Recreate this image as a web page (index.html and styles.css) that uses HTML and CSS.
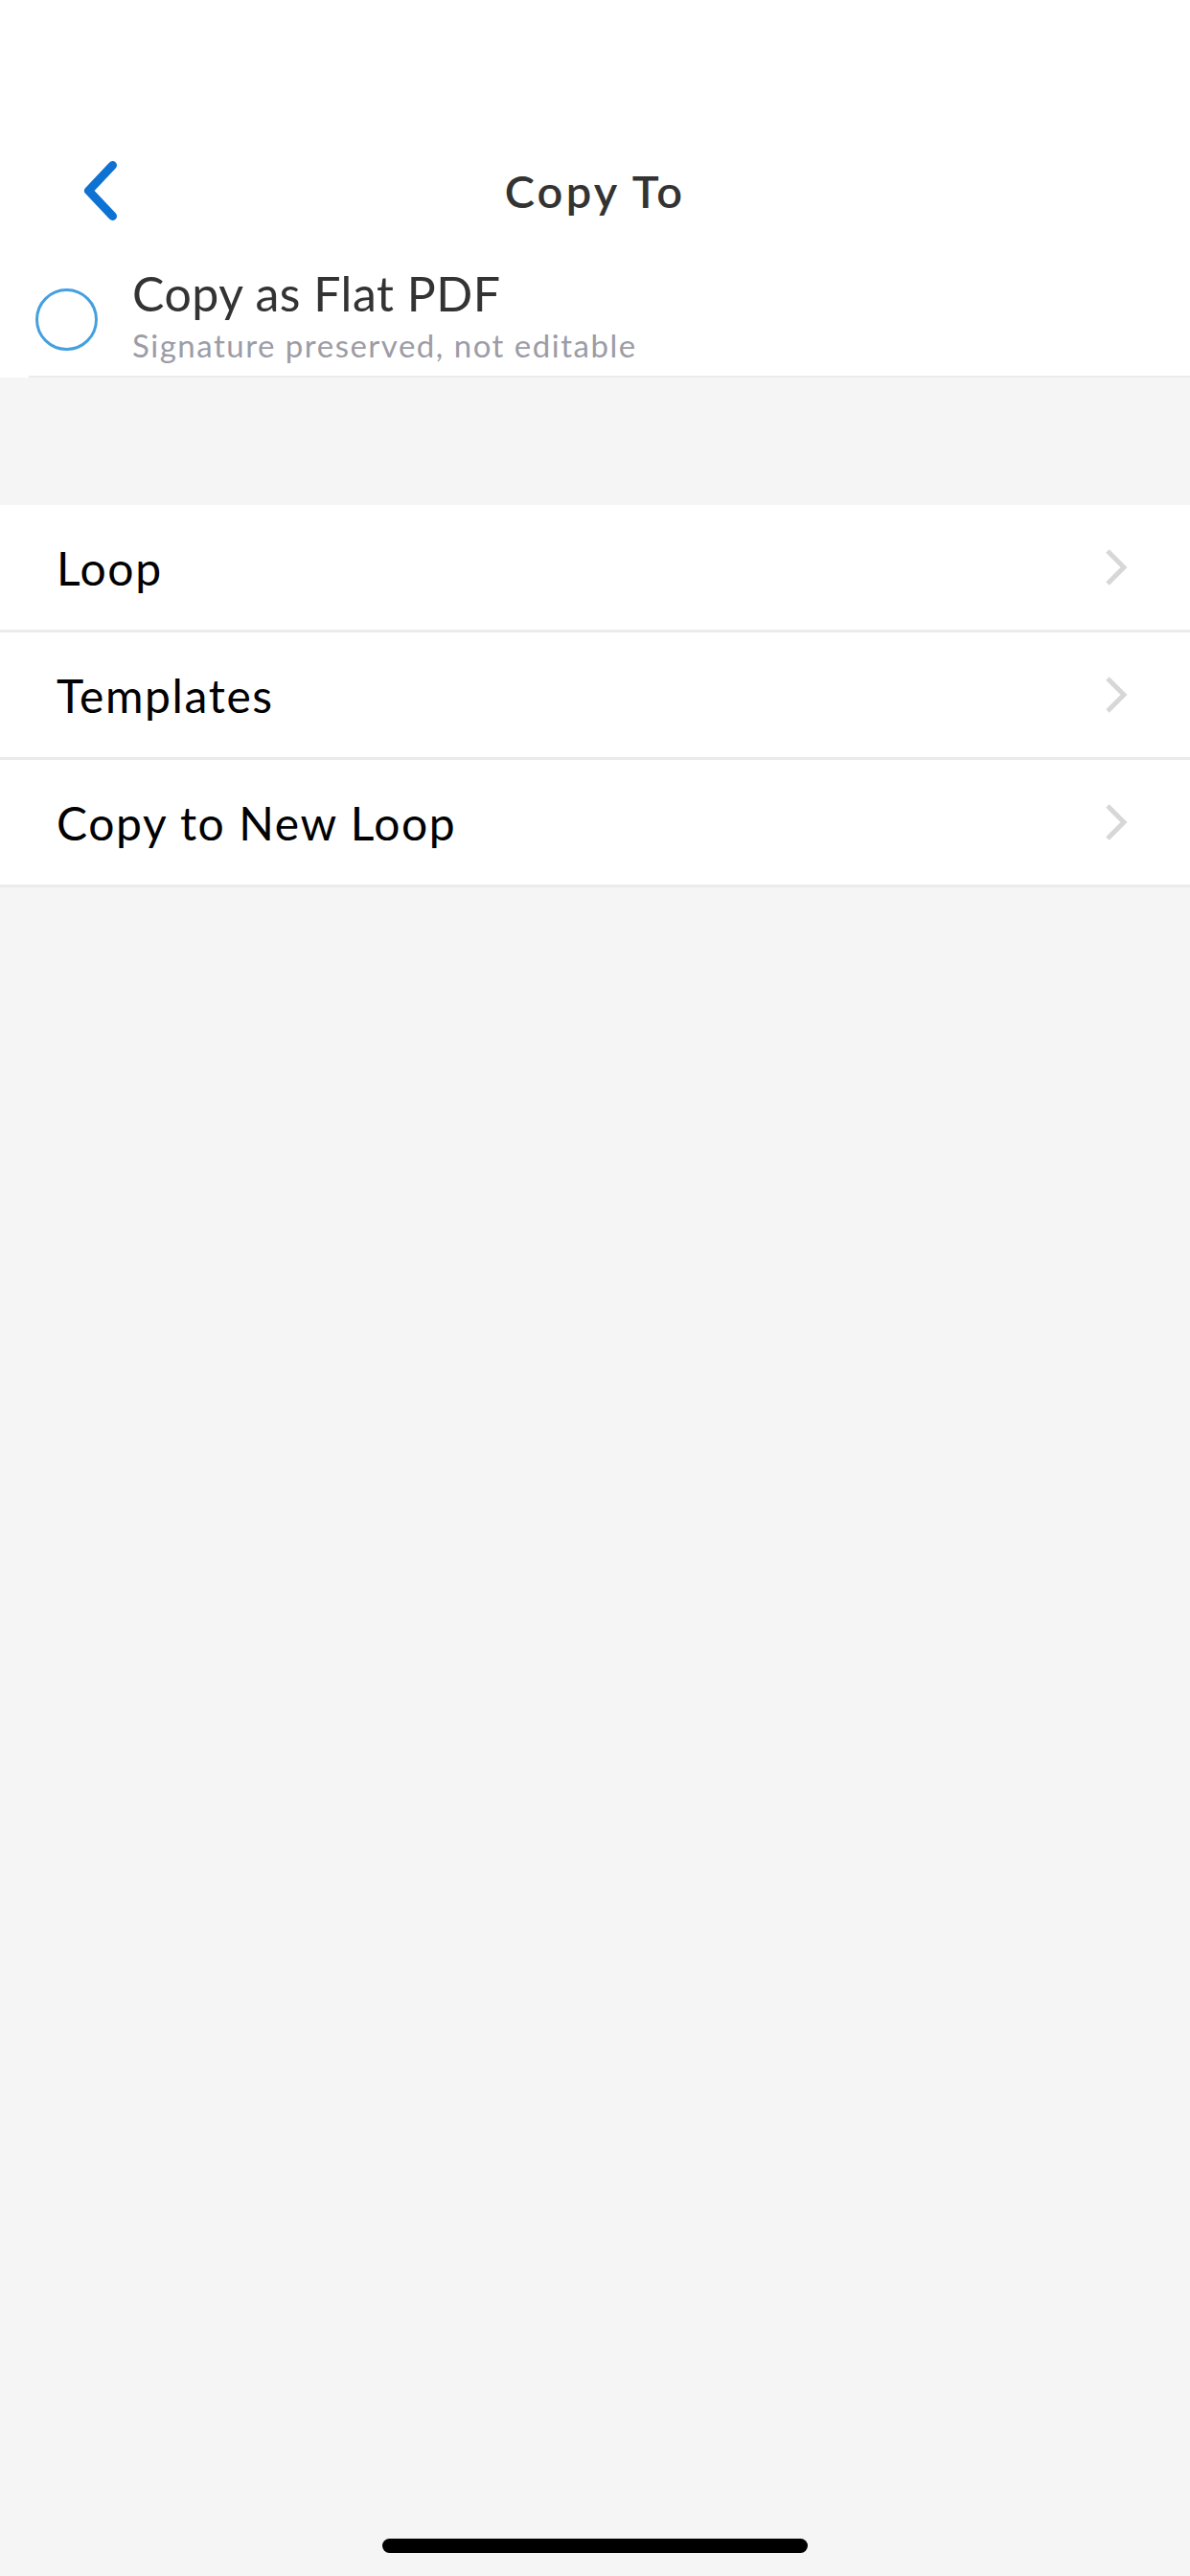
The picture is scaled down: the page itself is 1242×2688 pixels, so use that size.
FILE: index.html
```html
<!DOCTYPE html>
<html lang="en">
<head>
    <meta charset="UTF-8">
    <meta name="viewport" content="width=device-width, initial-scale=1.0">
    <title>Copy To</title>
    <link rel="stylesheet" href="styles.css">
</head>
<body>

    <div class="top">
        <header class="nav">
            <a class="back" href="#" aria-label="Back">
                <svg width="48" height="72" viewBox="0 0 48 72">
                    <path d="M37.5 9.5 L12.5 36 L37.5 62.5" fill="none" stroke="#0d72d2" stroke-width="9" stroke-linecap="round" stroke-linejoin="round"/>
                </svg>
            </a>
            <h1>Copy To</h1>
            <span></span>
        </header>

        <label class="option">
            <span class="radio"></span>
            <span class="option-text">
                <span class="option-title">Copy as Flat PDF</span>
                <span class="option-sub">Signature preserved, not editable</span>
            </span>
        </label>
    </div>

    <ul class="menu">
        <li><span>Loop</span><svg class="chev" width="26" height="42" viewBox="0 0 26 42"><path d="M4 4 L21 21 L4 38" fill="none" stroke="#d7d7d7" stroke-width="5"/></svg></li>
        <li><span>Templates</span><svg class="chev" width="26" height="42" viewBox="0 0 26 42"><path d="M4 4 L21 21 L4 38" fill="none" stroke="#d7d7d7" stroke-width="5"/></svg></li>
        <li><span>Copy to New Loop</span><svg class="chev" width="26" height="42" viewBox="0 0 26 42"><path d="M4 4 L21 21 L4 38" fill="none" stroke="#d7d7d7" stroke-width="5"/></svg></li>
    </ul>

    <div class="home-bar"></div>

</body>
</html>
```

FILE: styles.css
```css
body {
    font-family: Lato, "Open Sans", sans-serif;
    background-color: #f5f5f5;
    margin: 0;
    padding: 0;
    min-height: 2688px;
}
.top {
    background-color: white;
    padding-top: 132px;
}
.nav {
    display: grid;
    grid-template-columns: 1fr auto 1fr;
    align-items: center;
    height: 134px;
}
.back {
    display: flex;
    padding-left: 80px;
}
.nav h1 {
    margin: 0;
    font-size: 47px;
    font-weight: 600;
    color: #333;
    letter-spacing: 3.2px;
}
.option {
    display: flex;
    align-items: center;
    margin-left: 30px;
    height: 118px;
    padding-top: 8px;
    border-bottom: 2px solid #ebebeb;
}
.radio {
    width: 59px;
    height: 59px;
    border: 3px solid #44a0de;
    border-radius: 50%;
    margin-left: 7px;
}
.option-text {
    display: flex;
    flex-direction: column;
    margin-left: 36px;
    padding-bottom: 7px;
}
.option-title {
    font-size: 50px;
    color: #333;
    line-height: 54px;
    letter-spacing: 0.5px;
}
.option-sub {
    font-size: 33px;
    color: #9c9ca6;
    line-height: 40px;
    margin-top: 7px;
    letter-spacing: 1.5px;
}
.menu {
    list-style-type: none;
    margin: 133px 0 0;
    padding: 0;
    background-color: white;
}
.menu li {
    display: flex;
    align-items: center;
    justify-content: space-between;
    height: 130px;
    padding: 0 64px 0 59px;
    border-bottom: 3px solid #ebebeb;
    font-size: 48px;
    color: #000;
    letter-spacing: 1.6px;
}
.home-bar {
    position: absolute;
    left: 399px;
    top: 2649px;
    width: 444px;
    height: 15px;
    border-radius: 8px;
    background-color: #000;
}
```
